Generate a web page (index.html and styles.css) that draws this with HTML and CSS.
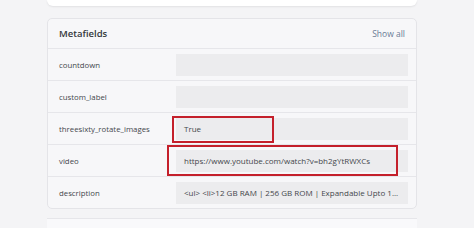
FILE: index.html
```html
<!DOCTYPE html>
<html lang="en">
<head>
  <meta charset="UTF-8" />
  <meta name="viewport" content="width=device-width, initial-scale=1.0" />
  <title>Metafields</title>
  <link rel="stylesheet" href="styles.css">
</head>
<body>
  <div class="page">
    <div class="top-card"></div>

    <div class="card">
      <div class="card-header">
        <span class="card-title">Metafields</span>
        <a class="show-all">Show all</a>
      </div>
      <div class="row">
        <span class="label">countdown</span>
        <div class="value"></div>
      </div>
      <div class="row">
        <span class="label">custom_label</span>
        <div class="value"></div>
      </div>
      <div class="row">
        <span class="label">threesixty_rotate_images</span>
        <div class="value">
          True
          <span class="mark mark-true"></span>
        </div>
      </div>
      <div class="row">
        <span class="label">video</span>
        <div class="value">
          https://www.youtube.com/watch?v=bh2gYtRWXCs
          <span class="mark mark-video"></span>
        </div>
      </div>
      <div class="row">
        <span class="label">description</span>
        <div class="value">&lt;ul&gt; &lt;li&gt;12 GB RAM | 256 GB ROM | Expandable Upto 1...</div>
      </div>
    </div>

    <div class="next-card"></div>
  </div>
</body>
</html>
```

FILE: styles.css
```css
body {
  margin: 0;
  background: #f4f4f6;
  font-family: "Open Sans", "Noto Sans", sans-serif;
  color: #3a3d42;
  height: 228px;
  overflow: hidden;
}
.page {
  width: 370px;
  margin-left: 47px;
  display: flex;
  flex-direction: column;
}
.top-card {
  height: 6px;
  background: #ffffff;
  border-radius: 0 0 6px 6px;
  box-shadow: 0 1px 2px rgba(0, 0, 0, 0.08);
}
.card {
  margin-top: 12px;
  background: #f7f7f9;
  border: 1px solid #e4e4e8;
  border-radius: 5px;
}
.card-header {
  height: 29px;
  display: flex;
  align-items: center;
  justify-content: space-between;
  padding: 0 11px 0 11px;
}
.card-title {
  font-size: 9.5px;
  font-weight: 600;
  color: #34373c;
}
.show-all {
  font-size: 8.5px;
  color: #6b7b95;
}
.row {
  height: 31px;
  border-top: 1px solid #e6e6ea;
  display: flex;
  align-items: center;
  padding-left: 11px;
}
.label {
  width: 117px;
  font-size: 7.8px;
  color: #44474c;
}
.value {
  position: relative;
  width: 224px;
  height: 22px;
  margin-left: auto;
  margin-right: 8px;
  padding-left: 8px;
  background: #ececee;
  display: flex;
  align-items: center;
  font-size: 8px;
  color: #44474c;
  white-space: nowrap;
}
.mark {
  position: absolute;
  border: 2px solid #c4202b;
  box-sizing: border-box;
}
.mark-true {
  left: -4px;
  top: -2px;
  width: 102px;
  height: 27px;
}
.mark-video {
  left: -9px;
  top: -5px;
  width: 231px;
  height: 31px;
}
.next-card {
  margin-top: 9px;
  height: 20px;
  background: #f9f9fb;
  border-top: 1px solid #e6e6ea;
}
```
